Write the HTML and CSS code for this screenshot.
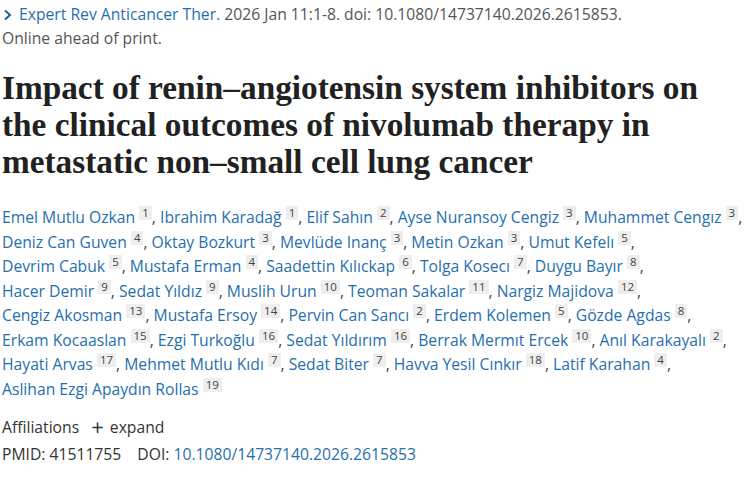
FILE: index.html
```html
<!DOCTYPE html>
<html>
<head>
<meta charset="utf-8">
<link rel="stylesheet" href="styles.css">
</head>
<body>
<main class="page">
  <div class="citation">
    <a class="journal" href="#"><svg class="chev" width="10" height="12" viewBox="0 0 10 12"><path d="M2 1.5 L7 6 L2 10.5" fill="none" stroke="#1f5f93" stroke-width="2"/></svg>Expert Rev Anticancer Ther.</a>
    <span class="cit">2026 Jan 11:1-8. doi: 10.1080/14737140.2026.2615853.</span>
  </div>
  <div class="status">Online ahead of print.</div>

  <h1 class="title">Impact of renin–angiotensin system inhibitors on the clinical outcomes of nivolumab therapy in metastatic non–small cell lung cancer</h1>

  <div class="authors">
    <span class="au"><a href="#">Emel Mutlu Ozkan</a> <sup class="aff">1</sup>,</span>
    <span class="au"><a href="#">Ibrahim Karadağ</a> <sup class="aff">1</sup>,</span>
    <span class="au"><a href="#">Elif Sahın</a> <sup class="aff">2</sup>,</span>
    <span class="au"><a href="#">Ayse Nuransoy Cengiz</a> <sup class="aff">3</sup>,</span>
    <span class="au"><a href="#">Muhammet Cengız</a> <sup class="aff">3</sup>,</span>
    <span class="au"><a href="#">Deniz Can Guven</a> <sup class="aff">4</sup>,</span>
    <span class="au"><a href="#">Oktay Bozkurt</a> <sup class="aff">3</sup>,</span>
    <span class="au"><a href="#">Mevlüde Inanç</a> <sup class="aff">3</sup>,</span>
    <span class="au"><a href="#">Metin Ozkan</a> <sup class="aff">3</sup>,</span>
    <span class="au"><a href="#">Umut Kefelı</a> <sup class="aff">5</sup>,</span>
    <span class="au"><a href="#">Devrim Cabuk</a> <sup class="aff">5</sup>,</span>
    <span class="au"><a href="#">Mustafa Erman</a> <sup class="aff">4</sup>,</span>
    <span class="au"><a href="#">Saadettin Kılıckap</a> <sup class="aff">6</sup>,</span>
    <span class="au"><a href="#">Tolga Kosecı</a> <sup class="aff">7</sup>,</span>
    <span class="au"><a href="#">Duygu Bayır</a> <sup class="aff">8</sup>,</span>
    <span class="au"><a href="#">Hacer Demir</a> <sup class="aff">9</sup>,</span>
    <span class="au"><a href="#">Sedat Yıldız</a> <sup class="aff">9</sup>,</span>
    <span class="au"><a href="#">Muslih Urun</a> <sup class="aff">10</sup>,</span>
    <span class="au"><a href="#">Teoman Sakalar</a> <sup class="aff">11</sup>,</span>
    <span class="au"><a href="#">Nargiz Majidova</a> <sup class="aff">12</sup>,</span>
    <span class="au"><a href="#">Cengiz Akosman</a> <sup class="aff">13</sup>,</span>
    <span class="au"><a href="#">Mustafa Ersoy</a> <sup class="aff">14</sup>,</span>
    <span class="au"><a href="#">Pervin Can Sancı</a> <sup class="aff">2</sup>,</span>
    <span class="au"><a href="#">Erdem Kolemen</a> <sup class="aff">5</sup>,</span>
    <span class="au"><a href="#">Gözde Agdas</a> <sup class="aff">8</sup>,</span>
    <span class="au"><a href="#">Erkam Kocaaslan</a> <sup class="aff">15</sup>,</span>
    <span class="au"><a href="#">Ezgi Turkoğlu</a> <sup class="aff">16</sup>,</span>
    <span class="au"><a href="#">Sedat Yıldırım</a> <sup class="aff">16</sup>,</span>
    <span class="au"><a href="#">Berrak Mermıt Ercek</a> <sup class="aff">10</sup>,</span>
    <span class="au"><a href="#">Anıl Karakayalı</a> <sup class="aff">2</sup>,</span>
    <span class="au"><a href="#">Hayati Arvas</a> <sup class="aff">17</sup>,</span>
    <span class="au"><a href="#">Mehmet Mutlu Kıdı</a> <sup class="aff">7</sup>,</span>
    <span class="au"><a href="#">Sedat Biter</a> <sup class="aff">7</sup>,</span>
    <span class="au"><a href="#">Havva Yesil Cınkır</a> <sup class="aff">18</sup>,</span>
    <span class="au"><a href="#">Latif Karahan</a> <sup class="aff">4</sup>,</span>
    <span class="au"><a href="#">Aslihan Ezgi Apaydın Rollas</a> <sup class="aff">19</sup></span>
  </div>

  <div class="affiliations">Affiliations <span class="expand"><span class="plus">+</span>expand</span></div>

  <div class="ids">
    <span class="pmid">PMID: 41511755</span>
    <span class="doi">DOI: <a href="#">10.1080/14737140.2026.2615853</a></span>
  </div>
</main>
</body>
</html>
```
FILE: styles.css
```css
html, body {
  margin: 0;
  padding: 0;
  background: #ffffff;
}
.page {
  padding: 2px 0 0 2px;
  font-family: "Open Sans", "Noto Sans", sans-serif;
  font-size: 15.7px;
  color: #555555;
}
a {
  color: #1f6fae;
  text-decoration: none;
}
.citation {
  line-height: 24px;
  white-space: nowrap;
}
.chev {
  margin: 0 6px 0 1px;
  vertical-align: -1px;
}
.status {
  line-height: 24px;
}
.title {
  margin: 19px 0 0 0;
  width: 720px;
  font-family: "Liberation Serif", "Times New Roman", serif;
  font-weight: bold;
  font-size: 33.3px;
  line-height: 37px;
  color: #212121;
}
.authors {
  margin-top: 25px;
  width: 748px;
  line-height: 24.5px;
  color: #444444;
}
.au {
  white-space: nowrap;
}
.aff {
  display: inline-block;
  font-size: 11.5px;
  line-height: 14px;
  padding: 0 3px;
  background: #eeeeee;
  color: #444444;
  vertical-align: 6px;
}
.affiliations {
  margin-top: 13px;
  line-height: 26px;
  color: #333333;
}
.expand {
  margin-left: 8px;
}
.plus {
  display: inline-block;
  font-size: 22px;
  line-height: 18px;
  margin-right: 6px;
  vertical-align: -2px;
}
.ids {
  margin-top: 1px;
  line-height: 27px;
  color: #333333;
}
.doi {
  margin-left: 12px;
}
```
